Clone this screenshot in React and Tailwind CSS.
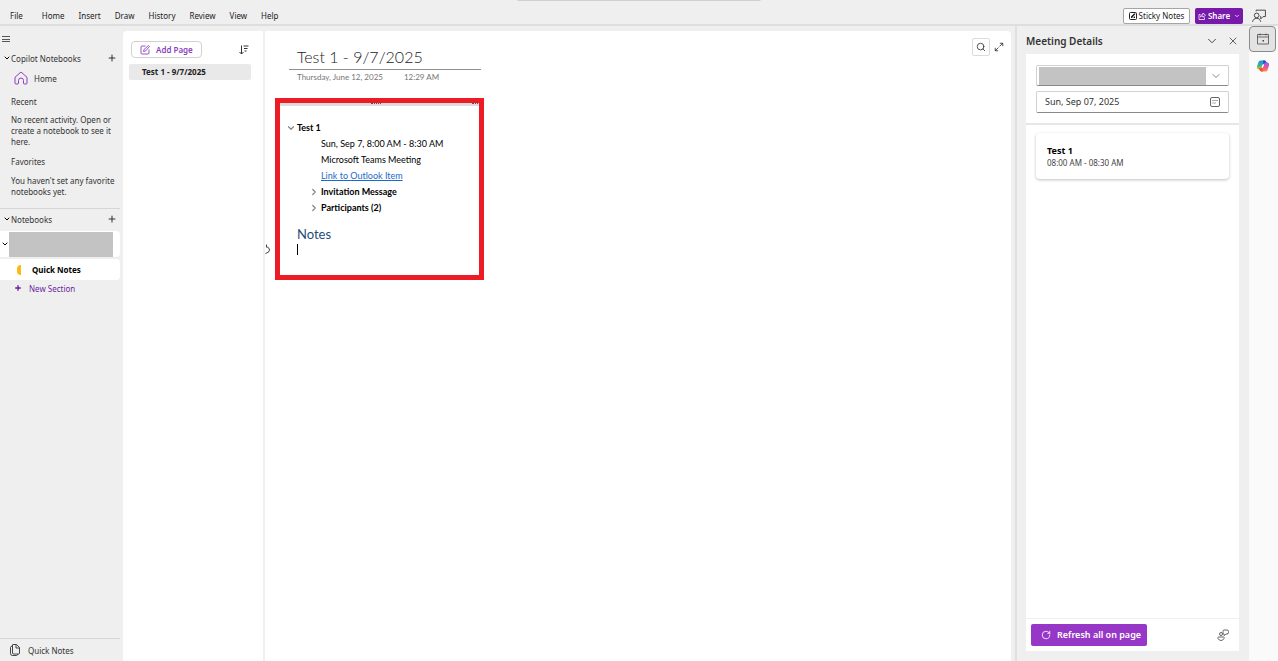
import React, { useState } from "react";
import { ChevronDown, ChevronRight, Maximize2, Plus, RotateCw, Search, X } from "lucide-react";

const MENUS = ["Home", "Insert", "Draw", "History", "Review", "View", "Help"];

function StickyIcon() {
  return (
    <svg viewBox="0 0 16 16" className="h-2 w-2" fill="none" stroke="#222" strokeWidth="2">
      <rect x="1" y="1" width="14" height="14" rx="2" />
      <path d="M4 12V9l6-6h3v1l-7 8zM12 8v4H8z" fill="#222" stroke="none" />
    </svg>
  );
}

function ShareIcon() {
  return (
    <svg viewBox="0 0 16 16" className="h-2 w-2" fill="none" stroke="currentColor" strokeWidth="1.5">
      <path d="M5 5H2v10h11v-4" />
      <path d="M5 10c0-3 2-5 5-5V2l5 4.500-5 4V8C8 8 6 8.500 5 10z" />
    </svg>
  );
}

function PersonFeedbackIcon() {
  return (
    <svg viewBox="0 0 24 24" className="h-3.5 w-3.5" fill="none" stroke="#333" strokeWidth="1.5">
      <circle cx="8" cy="11" r="4" />
      <path d="M1 22c1-4 3-6 7-6s6 2 7 6" />
      <path d="M7 4V2h16v11h-4l-4 4v-4h-1" />
    </svg>
  );
}

function NotebookHomeIcon() {
  return (
    <svg viewBox="0 0 28 28" className="h-3.5 w-3.5" fill="none" stroke="#8a3fc0" strokeWidth="2" strokeLinejoin="round">
      <path d="M2 12.500 14 2l12 10.500V24q0 2-2 2h-3q-2 0-2-2v-5a5 5 0 0 0-10 0v5q0 2-2 2H4q-2 0-2-2z" />
    </svg>
  );
}

function AddPageIcon() {
  return (
    <svg viewBox="0 0 20 20" className="h-2.5 w-2.5" fill="none" stroke="#8a3fc0" strokeWidth="1.8" strokeLinejoin="round">
      <path d="M11 2H4Q2 2 2 4v12q0 2 2 2h12q2 0 2-2V9" />
      <path d="m7 13 1-4 9-8 2 2-8 9z" />
    </svg>
  );
}

function SortIcon() {
  return (
    <svg viewBox="0 0 20 20" className="h-2.5 w-2.5" fill="none" stroke="#333" strokeWidth="2">
      <path d="M5 1v17M1 14l4 4 4-4M9 2h10M10 7h7M11 12h4" />
    </svg>
  );
}

function PagesIcon() {
  return (
    <svg viewBox="0 0 20 24" className="h-3 w-2.5" fill="none" stroke="#333" strokeWidth="1.800" strokeLinejoin="round">
      <path d="M5 2q0-1 1-1h7l6 6v11q0 2-2 2H7q-2 0-2-2z" />
      <path d="M12 1v7h7M5 4Q1 4 1 7v12q0 4 4 4h8q2 0 3-3" />
    </svg>
  );
}

function CalendarIcon() {
  return (
    <svg viewBox="0 0 24 24" className="h-3 w-3" fill="none" stroke="#444" strokeWidth="1.500">
      <path d="M1 3h22v19H1zM1 8h22M6 1v4M18 1v4" />
      <path d="M11 14h3v3h-3z" fill="#444" stroke="none" />
    </svg>
  );
}

function DatePickerIcon() {
  return (
    <svg viewBox="0 0 20 20" className="h-2.5 w-2.5" fill="none" stroke="#555" strokeWidth="1.800">
      <rect x="1" y="1" width="18" height="18" rx="3" />
      <path d="M5 7h2m2 0h2m2 0h2M5 12h2m2 0h2" strokeWidth="2.400" />
    </svg>
  );
}

function FeedbackIcon() {
  return (
    <svg viewBox="0 0 24 24" className="h-3 w-3" fill="none" stroke="#555" strokeWidth="1.800">
      <circle cx="8" cy="10" r="3" />
      <path d="M3 16h10q2 0 1 3-2 4-6 4t-6-4q-1-3 1-3z" />
      <path d="M14 2h6q3 0 3 3v2q0 3-3 3h-2l-4 3v-3q-2-1-2-3V5q0-3 2-3z" />
    </svg>
  );
}

function CopilotLogo() {
  return (
    <svg viewBox="0 0 24 24" className="h-3 w-3">
      <defs>
        <linearGradient id="cpLeft" x1="0" y1="0" x2="0" y2="1">
          <stop offset="0" stopColor="#1b8fe8" />
          <stop offset="0.6" stopColor="#3fb68b" />
          <stop offset="1" stopColor="#f3c11b" />
        </linearGradient>
        <linearGradient id="cpRight" x1="0" y1="0" x2="0" y2="1">
          <stop offset="0" stopColor="#9a5cf0" />
          <stop offset="0.5" stopColor="#e8529a" />
          <stop offset="1" stopColor="#ff8a3c" />
        </linearGradient>
      </defs>
      <path d="M7 1h8q3 0 4 4l1 2h-5q-2 0-3 3l-2 6q-1 3-3 3H4q-5 0-4-6l3-9q1-3 4-3z" fill="url(#cpLeft)" />
      <path d="M12 1h3q3 0 4 4l1 3h-5q-2 0-2 1z" fill="#1b4fc4" />
      <path d="M17 23H9q-3 0-4-4l-1-2h5q2 0 3-3l2-6q1-3 3-3h3q5 0 4 6l-3 9q-1 3-4 3z" fill="url(#cpRight)" />
      <path d="M12 23H9q-3 0-4-4l-1-3h5q2 0 2-1z" fill="#f0552b" />
      <path d="M11 9h3l-2 6H9z" fill="#fff" />
    </svg>
  );
}

function SectionHeader({ label, open, onToggle }) {
  return (
    <div className="flex h-4 items-center justify-between pr-[3px] pl-[3px]">
      <button onClick={onToggle} aria-expanded={open} className="flex items-center">
        <ChevronDown className="h-2 w-2 text-black" strokeWidth={3} />
        <span>{label}</span>
      </button>
      <button aria-label={`Add to ${label}`}>
        <Plus className="h-2.5 w-2.5" strokeWidth={2.5} />
      </button>
    </div>
  );
}

function Sidebar() {
  const [copilotOpen, setCopilotOpen] = useState(true);
  const [notebooksOpen, setNotebooksOpen] = useState(true);

  return (
    <nav className="flex w-[123px] shrink-0 flex-col pr-[3px] text-[8px] leading-[11px] text-[#333]">
      <button aria-label="Toggle navigation" className="mt-[9px] ml-0.5 flex h-2 w-2 flex-col justify-between py-px">
        <span className="h-px w-full bg-[#555]" />
        <span className="h-px w-full bg-[#555]" />
        <span className="h-px w-full bg-[#555]" />
      </button>

      <div className="mt-[7px]">
        <SectionHeader label="Copilot Notebooks" open={copilotOpen} onToggle={() => setCopilotOpen(!copilotOpen)} />
      </div>
      {copilotOpen && (
        <div className="pb-[11px]">
          <a href="#home" className="mt-0.5 ml-3.5 flex h-5 items-center gap-1.5">
            <NotebookHomeIcon />
            Home
          </a>
          <h2 className="mt-2 ml-[11px]">Recent</h2>
          <p className="mt-[7px] ml-[11px]">No recent activity. Open or<br />create a notebook to see it<br />here.</p>
          <h2 className="mt-[9px] ml-[11px]">Favorites</h2>
          <p className="mt-2 ml-[11px]">You haven't set any favorite<br />notebooks yet.</p>
        </div>
      )}

      <div className="border-t border-[#d6d6d6] pt-0.5">
        <SectionHeader label="Notebooks" open={notebooksOpen} onToggle={() => setNotebooksOpen(!notebooksOpen)} />
      </div>
      {notebooksOpen && (
        <div className="mt-1">
          <button aria-label="Notebook" className="flex h-[26px] w-full items-center rounded-r-sm bg-white pl-px">
            <ChevronDown className="h-2 w-2 text-black" strokeWidth={3} />
            <span className="h-[25px] w-[104px] bg-[#c3c3c3]" />
          </button>
          <a href="#quick-notes" className="mt-0.5 flex h-[21px] items-center gap-[11px] rounded-r-sm bg-white pl-[17px] font-bold text-black">
            <span className="h-2.5 w-1 rounded-l-sm bg-[#fdb913]" />
            Quick Notes
          </a>
          <button className="flex h-4 items-center gap-[7px] pl-3.5 text-[#6b1fa0]">
            <Plus className="h-2 w-2" strokeWidth={4} />
            New Section
          </button>
        </div>
      )}

      <a href="#quick-notes" className="mt-auto flex h-[23px] items-center gap-2 border-t border-[#d6d6d6] pl-2.5">
        <PagesIcon />
        Quick Notes
      </a>
    </nav>
  );
}

function PageList() {
  return (
    <div className="w-[140px] shrink-0 rounded-tl bg-white pt-2.5 pr-3 pl-1.5 text-[8px]">
      <div className="flex items-center justify-between pr-0.5 pl-0.5">
        <button className="flex h-[17px] w-[71px] items-center gap-1.5 rounded-sm border border-[#d1d1d1] pl-2 font-semibold text-[#8a3fc0]">
          <AddPageIcon />
          Add Page
        </button>
        <button aria-label="Sort pages">
          <SortIcon />
        </button>
      </div>
      <a href="#test-1" className="mt-1.5 flex h-4 items-center rounded-xs bg-[#e9e9e9] pl-[13px] font-bold text-[#222]">
        Test 1 - 9/7/2025
      </a>
    </div>
  );
}

function MeetingNote() {
  return (
    <section className="mt-3.5 ml-2.5 h-[182px] w-[209px] border-[5px] border-[#ed1c24] font-[Lato,sans-serif] text-[9px] leading-4 text-black">
      <div className="flex h-[3px] items-start bg-[#dcdcdc] pr-px">
        <span className="mx-auto w-2.5 border-t border-dotted border-[#555]" />
        <span className="w-1.5 border-t border-dotted border-[#555]" />
      </div>
      <div className="mt-3.5 flex items-center gap-px pl-1.5 font-bold">
        <ChevronDown className="h-2.5 w-2.5 text-[#888]" strokeWidth={3} />
        Test 1
      </div>
      <div className="pl-[41px]">
        <p>Sun, Sep 7, 8:00 AM - 8:30 AM</p>
        <p>Microsoft Teams Meeting</p>
        <a href="#outlook" className="block text-[#1b6ac9] underline">Link to Outlook Item</a>
      </div>
      {["Invitation Message", "Participants (2)"].map((label) => (
        <button key={label} className="flex items-center gap-0.5 pl-[29px] font-bold">
          <ChevronRight className="h-2.5 w-2.5 text-[#888]" strokeWidth={3} />
          {label}
        </button>
      ))}
      <h2 className="mt-2 pl-[17px] text-[13px] leading-5 text-[#1e4e79]">Notes</h2>
      <div className="ml-[17px] h-[11px] w-px bg-black" />
    </section>
  );
}

function Canvas() {
  return (
    <main className="flex min-w-0 flex-1 items-start justify-between rounded-tr border-l-2 border-[#f0f0f0] bg-white">
      <div className="relative">
        <svg viewBox="0 0 10 20" className="absolute top-[213px] left-0 h-2.5 w-[5px]" fill="none" stroke="#444" strokeWidth="2">
          <path d="M3 1v6M3 5q6 2 6 7t-8 7" />
        </svg>
        <div className="ml-6 w-[192px] border-b border-[#8f8f8f] pt-[15px] pb-px pl-2 font-[Lato,sans-serif]">
          <h1 className="text-[16px] leading-[22px] font-light text-[#222]">Test 1 - 9/7/2025</h1>
        </div>
        <p className="ml-8 flex h-[14px] items-center gap-[21px] font-[Lato,sans-serif] text-[8px] text-[#767676]">
          <span>Thursday, June 12, 2025</span>
          <span>12:29 AM</span>
        </p>
        <MeetingNote />
      </div>
      <div className="flex items-center gap-1 pt-[7px] pr-[7px]">
        <button aria-label="Search" className="flex h-[18px] w-[18px] items-center justify-center rounded-xs border border-[#dcdcdc]">
          <Search className="h-2.5 w-2.5 text-[#333]" />
        </button>
        <button aria-label="Full page view">
          <Maximize2 className="h-2.5 w-2.5 text-[#333]" />
        </button>
      </div>
    </main>
  );
}

function MeetingPanel() {
  return (
    <aside className="ml-1 flex w-[234px] shrink-0 flex-col border-l-2 border-[#e0e0e0] pr-2.5 pb-2.5 pl-[9px]">
      <div className="flex h-7 items-center pt-0.5 text-[#333]">
        <h2 className="flex-1 text-[10px] font-semibold">Meeting Details</h2>
        <button aria-label="Panel options"><ChevronDown className="mr-2 h-3.5 w-3.5" strokeWidth={1.5} /></button>
        <button aria-label="Close panel"><X className="h-3 w-3" strokeWidth={1.5} /></button>
      </div>
      <div className="flex flex-1 flex-col bg-white">
        <div className="flex flex-col gap-[5px] border-b-2 border-[#e6e6e6] px-2.5 pt-[11px] pb-2.5">
          <div className="flex h-[21px] items-center rounded-xs border border-[#d1d1d1] border-b-[#8a8a8a] pr-1.5 pl-0.5">
            <select aria-label="Account" className="h-[18px] flex-1 appearance-none bg-[#c3c3c3]" />
            <ChevronDown className="ml-1 h-3 w-3 text-[#555]" strokeWidth={1.5} />
          </div>
          <div className="flex h-[22px] items-center rounded-xs border border-[#d1d1d1] border-b-[#8a8a8a] pr-2 pl-2">
            <input aria-label="Meeting date" defaultValue="Sun, Sep 07, 2025" className="min-w-0 flex-1 text-[9px] text-[#333] outline-none" />
            <button aria-label="Pick a date"><DatePickerIcon /></button>
          </div>
        </div>
        <button className="mx-2.5 mt-2 flex h-[46px] flex-col justify-center rounded-sm bg-white pt-0.5 pl-[11px] text-left text-[8px] leading-3 text-[#444] shadow-[0_1px_3px_rgba(0,0,0,0.25)]">
          <span className="text-[9px] font-bold text-black">Test 1</span>
          <span>08:00 AM - 08:30 AM</span>
        </button>
        <div className="mt-auto flex h-[33px] items-center justify-between border-t border-[#f0f0f0] pr-2.5 pl-[5px]">
          <button className="flex h-[22px] w-[116px] items-center gap-1.5 rounded-xs bg-[#9637c8] pl-2.5 text-[9px] font-semibold text-white">
            <RotateCw className="h-2.5 w-2.5" strokeWidth={2} />
            Refresh all on page
          </button>
          <button aria-label="Send feedback"><FeedbackIcon /></button>
        </div>
      </div>
    </aside>
  );
}

export default function App() {
  return (
    <div className="relative flex min-h-screen flex-col bg-[#efefef] font-['Noto_Sans',sans-serif] text-[#222]">
      <div className="absolute top-0 left-1/2 h-px w-[243px] -translate-x-1/2 bg-[#cfcfcf]" />
      <header className="flex h-[26px] items-center justify-between border-b-2 border-[#dedede] pt-2 pr-3 pl-2.5 text-[8px]">
        <div className="flex items-center gap-3.5">
          <button className="mr-[5px]">File</button>
          {MENUS.map((menu) => (
            <button key={menu}>{menu}</button>
          ))}
        </div>
        <div className="flex items-center gap-[5px]">
          <button className="flex h-4 w-[67px] items-center justify-center gap-0.5 rounded-xs border border-[#a5a5a5] bg-white">
            <StickyIcon />
            Sticky Notes
          </button>
          <button className="mr-1 flex h-4 w-12 items-center justify-center gap-0.5 rounded-xs bg-[#7719aa] font-semibold text-white">
            <ShareIcon />
            Share
            <ChevronDown className="ml-0.5 h-1.5 w-1.5" strokeWidth={3} />
          </button>
          <button aria-label="Feedback"><PersonFeedbackIcon /></button>
        </div>
      </header>

      <div className="flex flex-1">
        <Sidebar />
        <div className="flex min-w-0 flex-1 pt-[5px]">
          <PageList />
          <Canvas />
        </div>
        <MeetingPanel />
        <div className="flex w-[29px] shrink-0 flex-col items-center gap-2 bg-[#fafafa] pr-0.5">
          <button aria-label="Meeting details" className="flex h-[26px] w-[27px] items-center justify-center rounded-sm border border-[#8a8a8a] bg-[#e3e3e3]">
            <CalendarIcon />
          </button>
          <button aria-label="Copilot"><CopilotLogo /></button>
        </div>
      </div>
    </div>
  );
}
